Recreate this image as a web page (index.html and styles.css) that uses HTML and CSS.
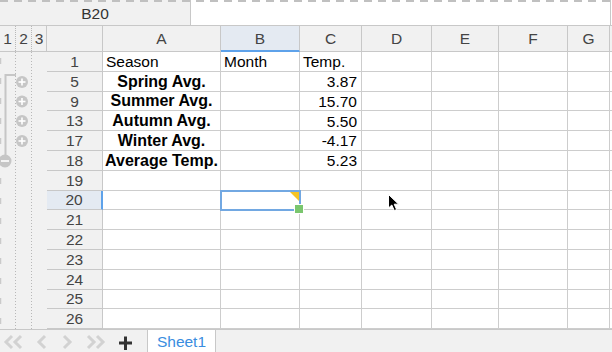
FILE: index.html
```html
<!DOCTYPE html>
<html>
<head>
<meta charset="utf-8">
<link rel="stylesheet" href="styles.css">
</head>
<body>
<div class="app">
  <div class="topbar">
    <div class="namebox">B20</div>
    <div class="formula"></div>
    <div class="formula-end"></div>
  </div>
  <div class="main">
    <div class="outline">
      <div class="levels"><span class="lv">1</span><span class="lv">2</span><span class="lv">3</span></div>
      <svg class="outline-body" width="47" height="278" viewBox="0 0 47 278">
        <line x1="15.5" y1="0" x2="15.5" y2="278" stroke="#b8b8b8" stroke-width="1" stroke-dasharray="1 2"/>
        <line x1="31.5" y1="0" x2="31.5" y2="278" stroke="#b8b8b8" stroke-width="1" stroke-dasharray="1 2"/>
        <line x1="0.5" y1="6" x2="0.5" y2="278" stroke="#cacaca" stroke-width="1.5" stroke-dasharray="6 14"/>
        <polyline points="16,23 5.5,23 5.5,103" fill="none" stroke="#c6c6c6" stroke-width="2"/>
        <g fill="#c6c6c6">
          <circle cx="22" cy="30" r="6"/>
          <circle cx="22" cy="49.5" r="6"/>
          <circle cx="22" cy="69" r="6"/>
          <circle cx="22" cy="89" r="6"/>
          <circle cx="5" cy="109" r="6.5"/>
        </g>
        <g stroke="#fff" stroke-width="1.6">
          <line x1="18.5" y1="30" x2="25.5" y2="30"/><line x1="22" y1="26.5" x2="22" y2="33.5"/>
          <line x1="18.5" y1="49.5" x2="25.5" y2="49.5"/><line x1="22" y1="46" x2="22" y2="53"/>
          <line x1="18.5" y1="69" x2="25.5" y2="69"/><line x1="22" y1="65.5" x2="22" y2="72.5"/>
          <line x1="18.5" y1="89" x2="25.5" y2="89"/><line x1="22" y1="85.5" x2="22" y2="92.5"/>
          <line x1="1" y1="109" x2="9" y2="109"/>
        </g>
      </svg>
    </div>
    <div class="sheet">
      <div class="hd corner"></div>
      <div class="hd col">A</div>
      <div class="hd col sel-col">B</div>
      <div class="hd col">C</div>
      <div class="hd col">D</div>
      <div class="hd col">E</div>
      <div class="hd col">F</div>
      <div class="hd col">G</div>
      <div class="hd col last"></div>

      <div class="hd row">1</div>
      <div class="c">Season</div><div class="c">Month</div><div class="c">Temp.</div><div class="c"></div><div class="c"></div><div class="c"></div><div class="c"></div><div class="c last"></div>

      <div class="hd row">5</div>
      <div class="c b">Spring Avg.</div><div class="c"></div><div class="c n">3.87</div><div class="c"></div><div class="c"></div><div class="c"></div><div class="c"></div><div class="c last"></div>

      <div class="hd row">9</div>
      <div class="c b">Summer Avg.</div><div class="c"></div><div class="c n">15.70</div><div class="c"></div><div class="c"></div><div class="c"></div><div class="c"></div><div class="c last"></div>

      <div class="hd row">13</div>
      <div class="c b">Autumn Avg.</div><div class="c"></div><div class="c n">5.50</div><div class="c"></div><div class="c"></div><div class="c"></div><div class="c"></div><div class="c last"></div>

      <div class="hd row">17</div>
      <div class="c b">Winter Avg.</div><div class="c"></div><div class="c n">-4.17</div><div class="c"></div><div class="c"></div><div class="c"></div><div class="c"></div><div class="c last"></div>

      <div class="hd row">18</div>
      <div class="c b">Average Temp.</div><div class="c"></div><div class="c n">5.23</div><div class="c"></div><div class="c"></div><div class="c"></div><div class="c"></div><div class="c last"></div>

      <div class="hd row">19</div>
      <div class="c"></div><div class="c"></div><div class="c"></div><div class="c"></div><div class="c"></div><div class="c"></div><div class="c"></div><div class="c last"></div>

      <div class="hd row sel-row">20</div>
      <div class="c"></div>
      <div class="c active"><span class="selbox"><span class="tri"></span><span class="handle"></span></span></div>
      <div class="c"></div><div class="c cursor-cell"><svg class="cursor" width="14" height="20" viewBox="0 0 14 20"><path d="M1.5 1.5 L1.5 15 L4.8 12 L7.3 17.6 L9.6 16.6 L7.2 11.2 L11.6 11.2 Z" fill="#000" stroke="#fff" stroke-width="1"/></svg></div><div class="c"></div><div class="c"></div><div class="c"></div><div class="c last"></div>

      <div class="hd row">21</div>
      <div class="c"></div><div class="c"></div><div class="c"></div><div class="c"></div><div class="c"></div><div class="c"></div><div class="c"></div><div class="c last"></div>
      <div class="hd row">22</div>
      <div class="c"></div><div class="c"></div><div class="c"></div><div class="c"></div><div class="c"></div><div class="c"></div><div class="c"></div><div class="c last"></div>
      <div class="hd row">23</div>
      <div class="c"></div><div class="c"></div><div class="c"></div><div class="c"></div><div class="c"></div><div class="c"></div><div class="c"></div><div class="c last"></div>
      <div class="hd row">24</div>
      <div class="c"></div><div class="c"></div><div class="c"></div><div class="c"></div><div class="c"></div><div class="c"></div><div class="c"></div><div class="c last"></div>
      <div class="hd row">25</div>
      <div class="c"></div><div class="c"></div><div class="c"></div><div class="c"></div><div class="c"></div><div class="c"></div><div class="c"></div><div class="c last"></div>
      <div class="hd row">26</div>
      <div class="c"></div><div class="c"></div><div class="c"></div><div class="c"></div><div class="c"></div><div class="c"></div><div class="c"></div><div class="c last"></div>
    </div>
  </div>
  <div class="tabbar">
    <div class="nav">
      <svg width="140" height="22" viewBox="0 0 140 22">
        <g fill="none" stroke="#d2d2d2" stroke-width="3" stroke-linejoin="miter">
          <polyline points="12,6 6,12 12,18"/>
          <polyline points="21,6 15,12 21,18"/>
          <polyline points="45,6 39,12 45,18"/>
          <polyline points="64,6 70,12 64,18"/>
          <polyline points="88,6 94,12 88,18"/>
          <polyline points="97,6 103,12 97,18"/>
        </g>
        <g stroke="#333" stroke-width="3">
          <line x1="119" y1="13" x2="132" y2="13"/>
          <line x1="125.5" y1="6.5" x2="125.5" y2="20"/>
        </g>
      </svg>
    </div>
    <div class="tab">Sheet1</div>
    <div class="tab-rest"></div>
  </div>
</div>
</body>
</html>
```
FILE: styles.css
```css
* { box-sizing: border-box; }
html, body { margin: 0; padding: 0; }
body {
  width: 612px;
  height: 352px;
  overflow: hidden;
  background: #fff;
  font-family: "Liberation Sans", Arial, sans-serif;
  font-size: 15.5px;
  color: #000;
}
.app { width: 612px; height: 352px; display: flex; flex-direction: column; }

.topbar {
  height: 26px;
  display: flex;
  border-bottom: 1px solid #c8c8c8;
  background-image: repeating-linear-gradient(90deg, #c0c0c0 0 8px, transparent 8px 14px);
  background-size: 100% 2px;
  background-repeat: no-repeat;
  background-color: #fff;
  flex: none;
}
.namebox {
  width: 191px;
  border-right: 1px solid #c8c8c8;
  background-color: #f1f1f1;
  background-image: repeating-linear-gradient(90deg, #c0c0c0 0 8px, transparent 8px 14px);
  background-size: 100% 2px;
  background-repeat: no-repeat;
  color: #333;
  font-size: 15.5px;
  display: flex;
  align-items: center;
  justify-content: center;
  padding-top: 2px;
}
.formula { width: 419px; }
.formula-end { flex: 1; border-left: 1px solid #c8c8c8; }

.main { display: flex; flex: none; height: 303px; }

.outline { width: 47px; flex: none; background: #f1f1f1; }
.levels {
  height: 26px;
  display: grid;
  grid-template-columns: 16px 16px 15px;
  border-bottom: 1px solid #c8c8c8;
  color: #444;
}
.lv {
  display: flex; align-items: center; justify-content: center;
  border-right: 1px dotted #b8b8b8;
  padding-top: 1px;
}
.lv:last-child { border-right: 1px solid #c8c8c8; }
.outline-body { display: block; }

.sheet {
  flex: 1;
  display: grid;
  grid-template-columns: 56px 118px 79px 62px 70px 67px 69px 42px 1fr;
  grid-template-rows: 26px repeat(14, 19.8px);
  align-content: start;
}
.hd {
  background: #f1f1f1;
  color: #444;
  border-right: 1px solid #c8c8c8;
  border-bottom: 1px solid #c8c8c8;
  display: flex;
  align-items: center;
  justify-content: center;
}
.hd.col { padding-top: 1px; }
.hd.row { padding-top: 1px; }
.hd.sel-col { background: #e4eaf2; border-bottom: 2px solid #5ea2ea; }
.hd.sel-row { background: #e4eaf2; border-right: 2px solid #5ea2ea; }
.c {
  border-right: 1px solid #cdcdcd;
  border-bottom: 1px solid #cdcdcd;
  padding: 0 3px;
  display: flex;
  align-items: center;
  white-space: nowrap;
  overflow: visible;
  line-height: 1;
  padding-top: 1px;
}
.c.b { font-weight: bold; font-size: 16px; justify-content: center; padding: 1px 0 0; }
.c.n { justify-content: flex-end; padding-right: 4px; }
.last { border-right: none; }

.active { position: relative; }
.selbox {
  position: absolute;
  left: -1px; top: -1px;
  width: 81px; height: 21px;
  border: 2px solid #72a8e2;
}
.tri {
  position: absolute;
  right: 0; top: 0;
  width: 0; height: 0;
  border-top: 9px solid #f6c324;
  border-left: 9px solid transparent;
}
.handle {
  position: absolute;
  right: -5px; bottom: -5px;
  width: 8px; height: 8px;
  background: #7ac66e;
  border: 1px solid #fff;
  box-sizing: content-box;
}
.cursor-cell { position: relative; }
.cursor { position: absolute; left: 25px; top: 2px; }

.tabbar {
  flex: 1;
  display: flex;
  background: #f1f1f1;
  border-top: 1px solid #c8c8c8;
}
.nav { width: 147px; display: flex; align-items: flex-end; }
.nav svg { display: block; }
.tab {
  width: 69px;
  background: #fff;
  border-left: 1px solid #c8c8c8;
  border-right: 1px solid #c8c8c8;
  color: #3a8de0;
  display: flex;
  align-items: center;
  justify-content: center;
  padding-top: 1px;
}
.tab-rest { flex: 1; }
```
